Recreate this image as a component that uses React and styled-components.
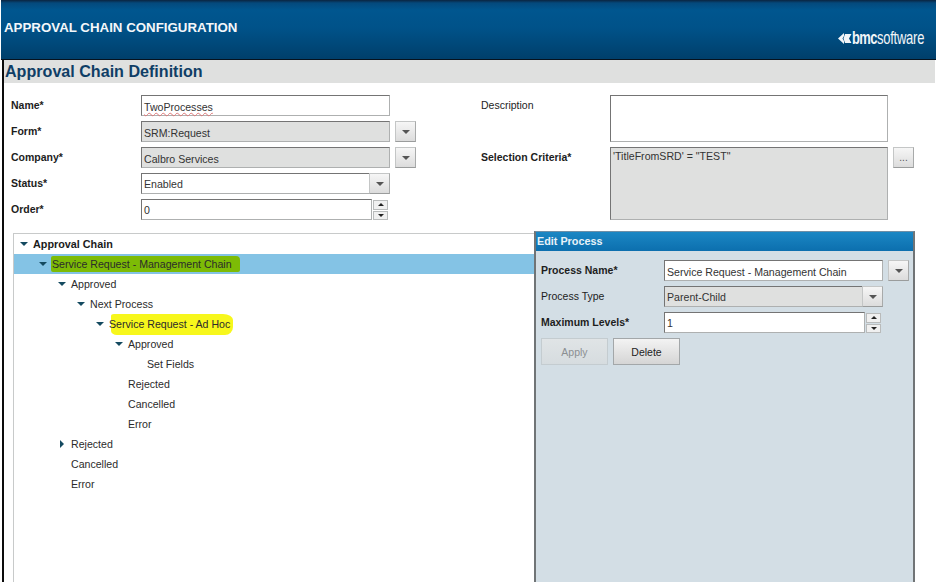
import React from 'react';
import styled, { createGlobalStyle } from 'styled-components';

const GlobalStyle = createGlobalStyle`
  html, body {
    margin: 0;
    padding: 0;
    background: #fff;
    overflow: hidden;
  }
  body {
    font-family: "Liberation Sans", Arial, sans-serif;
    font-size: 11px;
    color: #222;
  }
`

const Page = styled.div`
  width: 936px;
  height: 582px;
  overflow: hidden;
  padding-left: 1px;
  box-sizing: border-box;
`

const Header = styled.header`
  height: 60px;
  box-sizing: border-box;
  display: flex;
  justify-content: space-between;
  padding: 20px 12px 0 3px;
  background: linear-gradient(#0b2440 0, #04497c 3px, #00568f 10px, #005289 28px, #00406c 58px);
  border-bottom: 1px solid #06121e;
`

const HeaderTitle = styled.div`
  color: #f4f7fa;
  font-size: 13.3px;
  font-weight: bold;
  line-height: 15px;
`

const Logo = styled.div`
  display: flex;
  align-items: center;
  width: 86px;
  height: 20px;
  margin-top: 8px;
  color: #f2f5f8;
`

const LogoText = styled.div`
  font-size: 18px;
  white-space: nowrap;
  transform: scaleX(0.72);
  transform-origin: left center;
  letter-spacing: -0.3px;
  b {
    font-weight: bold;
    letter-spacing: -0.8px;
  }
`

const Content = styled.div`
  margin-left: 1px;
  height: 522px;
  border-left: 2px solid #0c0c0c;
  box-sizing: border-box;
`

const SectionTitle = styled.h1`
  margin: 0;
  height: 23px;
  width: 931px;
  background: #dfe0df;
  color: #0f3e66;
  font-size: 16.1px;
  font-weight: bold;
  line-height: 22px;
  padding-left: 1px;
  box-sizing: border-box;
`

const FormArea = styled.div`
  display: flex;
  padding: 12px 0 0 7px;
`

const FormColumn = styled.div`
  display: grid;
  grid-template-columns: ${props => props.labelWidth}px max-content max-content;
  grid-auto-rows: 21px;
  gap: 5px 0;
  width: ${props => props.width}px;
`

const FieldLabel = styled.label`
  font-size: 10.5px;
  line-height: 20px;
  font-weight: ${props => props.bold ? 'bold' : 'normal'};
  color: #1d1d1d;
  grid-column: 1;
  grid-row: ${props => props.span ? `span ${props.span}` : 'auto'};
`

const Field = styled.div`
  display: flex;
  align-items: ${props => props.multi ? 'flex-start' : 'center'};
  box-sizing: border-box;
  width: ${props => props.width}px;
  height: 100%;
  grid-row: ${props => props.span ? `span ${props.span}` : 'auto'};
  padding: ${props => props.multi ? '2px 2px' : props.low ? '3px 2px 0' : '1px 2px 0'};
  border: 1px solid #aeb0b0;
  border-top-color: #747474;
  border-left-color: #747474;
  background: ${props => props.disabled ? '#dfe0df' : '#fff'};
  font-size: 10.6px;
  color: #333;
  position: relative;
`

const Misspelled = styled.span`
  text-decoration: underline wavy #d77;
  text-decoration-thickness: 1px;
`

const SquareButton = styled.button`
  display: flex;
  align-items: center;
  justify-content: center;
  width: ${props => props.width || 21}px;
  height: 21px;
  padding: 0;
  margin-left: ${props => props.inset ? 0 : 5}px;
  flex: none;
  border: 1px solid #c4c6c6;
  border-bottom-color: #9a9c9c;
  border-right-color: #a8aaaa;
  background: linear-gradient(#f6f6f6, #dcdcdc);
  font-family: inherit;
  font-size: 10px;
  color: #555;
`

const Caret = styled.i`
  display: block;
  width: 0;
  height: 0;
  border-left: 4px solid transparent;
  border-right: 4px solid transparent;
  border-top: 4px solid #555;
`

const SelectEnd = styled(SquareButton)`
  position: absolute;
  right: -1px;
  top: -1px;
`

const Spinner = styled.div`
  position: absolute;
  right: -17px;
  top: 0;
  width: 15px;
  height: 20px;
  display: flex;
  flex-direction: column;
  gap: 1px;
`

const SpinPart = styled.div`
  flex: 1;
  display: flex;
  align-items: center;
  justify-content: center;
  border: 1px solid #b9bbbb;
  background: #f0f0f0;
  i {
    width: 0;
    height: 0;
    border-left: 3px solid transparent;
    border-right: 3px solid transparent;
    ${props => props.up ? 'border-bottom: 3px solid #222;' : 'border-top: 3px solid #222;'}
  }
`

const Workspace = styled.div`
  display: flex;
  align-items: flex-start;
  margin-top: 10px;
  padding-left: 9px;
`

const TreePanel = styled.div`
  width: 521px;
  height: 380px;
  margin-top: 3px;
  box-sizing: border-box;
  border-top: 1px solid #c8caca;
  border-left: 1px solid #c8caca;
`

const TreeRow = styled.div`
  display: flex;
  align-items: center;
  height: 20px;
  padding-left: ${props => props.level * 19 + 3}px;
  background: ${props => props.selected ? '#84c3e5' : 'transparent'};
  font-size: ${props => props.bold ? 10.8 : 10.6}px;
  font-weight: ${props => props.bold ? 'bold' : 'normal'};
  color: ${props => props.bold ? '#1b1b1b' : '#2b2b2b'};
  white-space: nowrap;
`

const Twisty = styled.span`
  flex: none;
  width: 14px;
  margin-right: 2px;
  display: flex;
  justify-content: center;
  i {
    display: block;
    width: 0;
    height: 0;
    ${props => props.closed
      ? `border-top: 4px solid transparent;
         border-bottom: 4px solid transparent;
         border-left: 4px solid #144a60;`
      : `border-left: 4px solid transparent;
         border-right: 4px solid transparent;
         border-top: 4px solid #144a60;`}
  }
`

const Marker = styled.span`
  position: relative;
  z-index: 0;
  &::before {
    content: '';
    position: absolute;
    z-index: -1;
    background: ${props => props.color};
    top: ${props => props.top}px;
    bottom: ${props => props.bottom}px;
    left: ${props => props.left}px;
    right: ${props => props.right}px;
    border-radius: ${props => props.radius};
  }
`

const EditPanel = styled.section`
  width: 381px;
  height: 360px;
  margin-top: 1px;
  box-sizing: border-box;
  background: #d3dee5;
  border-left: 2px solid #707476;
  border-right: 2px solid #707476;
  border-top: 1px solid #6f8fa6;
`

const EditHeader = styled.div`
  height: 19px;
  background: linear-gradient(#1b87c4, #0c6fae);
  color: #e8f2f8;
  font-size: 10.8px;
  font-weight: bold;
  line-height: 18px;
  padding-left: 1px;
`

const EditForm = styled.div`
  display: grid;
  grid-template-columns: 123px max-content max-content;
  grid-auto-rows: 21px;
  gap: 5px 0;
  padding: 9px 0 0 5px;
`

const ActionRow = styled.div`
  display: flex;
  gap: 5px;
  padding: 5px 0 0 5px;
`

const ActionButton = styled.button`
  height: 27px;
  width: ${props => props.width}px;
  padding: 0;
  font-family: inherit;
  font-size: 10.5px;
  color: ${props => props.disabled ? '#8b8f92' : '#222'};
  border: 1px solid ${props => props.disabled ? '#c4ccd0' : '#a3a7a9'};
  background: ${props => props.disabled
    ? 'linear-gradient(#e0e4e6, #d6dcdf)'
    : 'linear-gradient(#f3f3f3, #d5d5d5)'};
`

const tree = [
  { label: 'Approval Chain', level: 0, open: true, bold: true },
  { label: 'Service Request - Management Chain', level: 1, open: true, selected: true },
  { label: 'Approved', level: 2, open: true },
  { label: 'Next Process', level: 3, open: true },
  { label: 'Service Request - Ad Hoc', level: 4, open: true, yellow: true },
  { label: 'Approved', level: 5, open: true },
  { label: 'Set Fields', level: 6 },
  { label: 'Rejected', level: 5 },
  { label: 'Cancelled', level: 5 },
  { label: 'Error', level: 5 },
  { label: 'Rejected', level: 2, closed: true },
  { label: 'Cancelled', level: 2 },
  { label: 'Error', level: 2 },
]

function TreeLabel({ node }) {
  if (node.selected) {
    return (
      <Marker color="#7dbb06" top={-2} bottom={-2} left={-1} right={-8} radius="2px 4px 2px 2px">
        {node.label}
      </Marker>
    )
  }
  if (node.yellow) {
    return (
      <Marker color="#f7f71c" top={-4} bottom={-5} left={2} right={-3} radius="3px 10px 8px 6px / 2px 6px 8px 4px">
        {node.label}
      </Marker>
    )
  }
  return node.label
}

const App = () => {
  return (
    <Page>
      <GlobalStyle />
      <Header>
        <HeaderTitle>APPROVAL CHAIN CONFIGURATION</HeaderTitle>
        <Logo>
          <svg width="14" height="11" viewBox="0 0 14 11" style={{ flex: 'none' }}>
            <path d="M0 5.5 L6 0 L6 3 L4.5 5.5 L6 8 L6 11 Z M7 1 L13.5 1 L11 5.5 L13.5 10 L7 10 L5.5 5.5 Z" fill="#f2f5f8" />
          </svg>
          <LogoText><b>bmc</b>software</LogoText>
        </Logo>
      </Header>
      <Content>
        <SectionTitle>Approval Chain Definition</SectionTitle>
        <FormArea>
          <FormColumn width={470} labelWidth={130}>
            <FieldLabel bold>Name*</FieldLabel>
            <Field width={249} low><Misspelled>TwoProcesses</Misspelled></Field>
            <span />
            <FieldLabel bold>Form*</FieldLabel>
            <Field width={249} low disabled>SRM:Request</Field>
            <SquareButton><Caret /></SquareButton>
            <FieldLabel bold>Company*</FieldLabel>
            <Field width={249} low disabled>Calbro Services</Field>
            <SquareButton><Caret /></SquareButton>
            <FieldLabel bold>Status*</FieldLabel>
            <Field width={249}>Enabled<SelectEnd inset><Caret /></SelectEnd></Field>
            <span />
            <FieldLabel bold>Order*</FieldLabel>
            <Field width={231}>
              0
              <Spinner>
                <SpinPart up><i /></SpinPart>
                <SpinPart><i /></SpinPart>
              </Spinner>
            </Field>
          </FormColumn>
          <FormColumn width={450} labelWidth={129}>
            <FieldLabel span={2}>Description</FieldLabel>
            <Field width={278} span={2} multi />
            <span />
            <span />
            <FieldLabel span={3} bold>Selection Criteria*</FieldLabel>
            <Field width={278} span={3} multi disabled>'TitleFromSRD' = "TEST"</Field>
            <SquareButton>...</SquareButton>
          </FormColumn>
        </FormArea>
        <Workspace>
          <TreePanel>
            {tree.map((node, i) => (
              <TreeRow key={i} level={node.level} bold={node.bold} selected={node.selected}>
                {node.open || node.closed
                  ? <Twisty closed={node.closed}><i /></Twisty>
                  : <Twisty />}
                <span><TreeLabel node={node} /></span>
              </TreeRow>
            ))}
          </TreePanel>
          <EditPanel>
            <EditHeader>Edit Process</EditHeader>
            <EditForm>
              <FieldLabel bold>Process Name*</FieldLabel>
              <Field width={219} low>Service Request - Management Chain</Field>
              <SquareButton><Caret /></SquareButton>
              <FieldLabel>Process Type</FieldLabel>
              <Field width={219} disabled>Parent-Child<SelectEnd inset><Caret /></SelectEnd></Field>
              <span />
              <FieldLabel bold>Maximum Levels*</FieldLabel>
              <Field width={201}>
                1
                <Spinner>
                  <SpinPart up><i /></SpinPart>
                  <SpinPart><i /></SpinPart>
                </Spinner>
              </Field>
            </EditForm>
            <ActionRow>
              <ActionButton width={67} disabled>Apply</ActionButton>
              <ActionButton width={67}>Delete</ActionButton>
            </ActionRow>
          </EditPanel>
        </Workspace>
      </Content>
    </Page>
  )
}

export default App;
